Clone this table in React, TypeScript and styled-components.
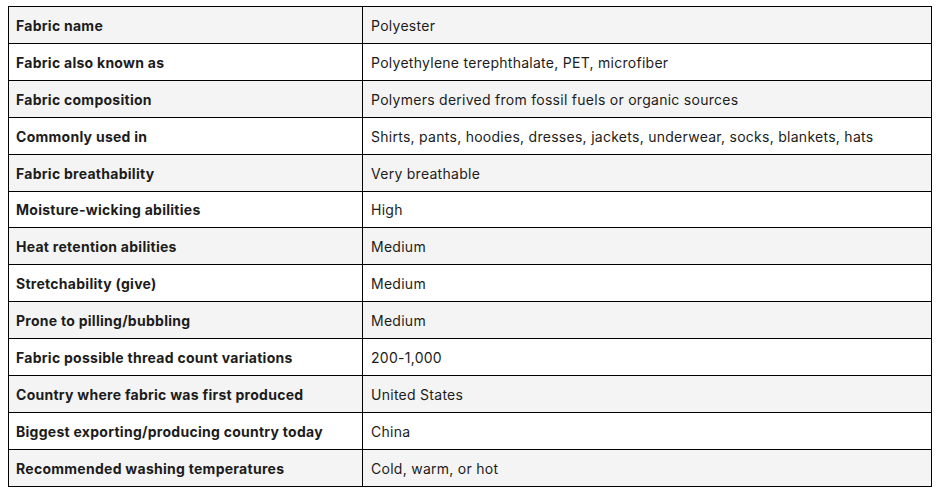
import React from "react";
import styled, { createGlobalStyle } from "styled-components";

const GlobalStyle = createGlobalStyle`
  body {
    margin: 6px 8px;
    background: #ffffff;
    font-family: Inter, "Liberation Sans", sans-serif;
  }
`;

const rows: Array<[string, string]> = [
  ["Fabric name", "Polyester"],
  ["Fabric also known as", "Polyethylene terephthalate, PET, microfiber"],
  ["Fabric composition", "Polymers derived from fossil fuels or organic sources"],
  [
    "Commonly used in",
    "Shirts, pants, hoodies, dresses, jackets, underwear, socks, blankets, hats",
  ],
  ["Fabric breathability", "Very breathable"],
  ["Moisture-wicking abilities", "High"],
  ["Heat retention abilities", "Medium"],
  ["Stretchability (give)", "Medium"],
  ["Prone to pilling/bubbling", "Medium"],
  ["Fabric possible thread count variations", "200-1,000"],
  ["Country where fabric was first produced", "United States"],
  ["Biggest exporting/producing country today", "China"],
  ["Recommended washing temperatures", "Cold, warm, or hot"],
];

const App: React.FC = () => {
  return (
    <>
      <GlobalStyle />
      <FactTable>
        <colgroup>
          <col style={{ width: 354 }} />
          <col />
        </colgroup>
        <tbody>
          {rows.map(([label, value], i) => (
            <Row key={label} striped={i % 2 === 0}>
              <LabelCell>{label}</LabelCell>
              <ValueCell>{value}</ValueCell>
            </Row>
          ))}
        </tbody>
      </FactTable>
    </>
  );
};

const FactTable = styled.table`
  width: 924px;
  border-collapse: separate;
  border-spacing: 0;
  table-layout: fixed;
  border-top: 1px solid #000000;
  border-left: 1px solid #000000;
  font-size: 14px;
  letter-spacing: 0.27px;
  color: #1c1c1c;
`;

const Row = styled.tr<{ striped: boolean }>`
  height: 36.92px;
  background: ${(p) => (p.striped ? "#f4f4f4" : "#ffffff")};
`;

const Cell = styled.td`
  border-right: 1px solid #000000;
  border-bottom: 1px solid #000000;
  padding: 1px 7px 0;
  vertical-align: middle;
  white-space: nowrap;
`;

const LabelCell = styled(Cell)`
  font-weight: 700;
`;

const ValueCell = styled(Cell)`
  font-weight: 400;
  padding-left: 8px;
`;

export default App;
